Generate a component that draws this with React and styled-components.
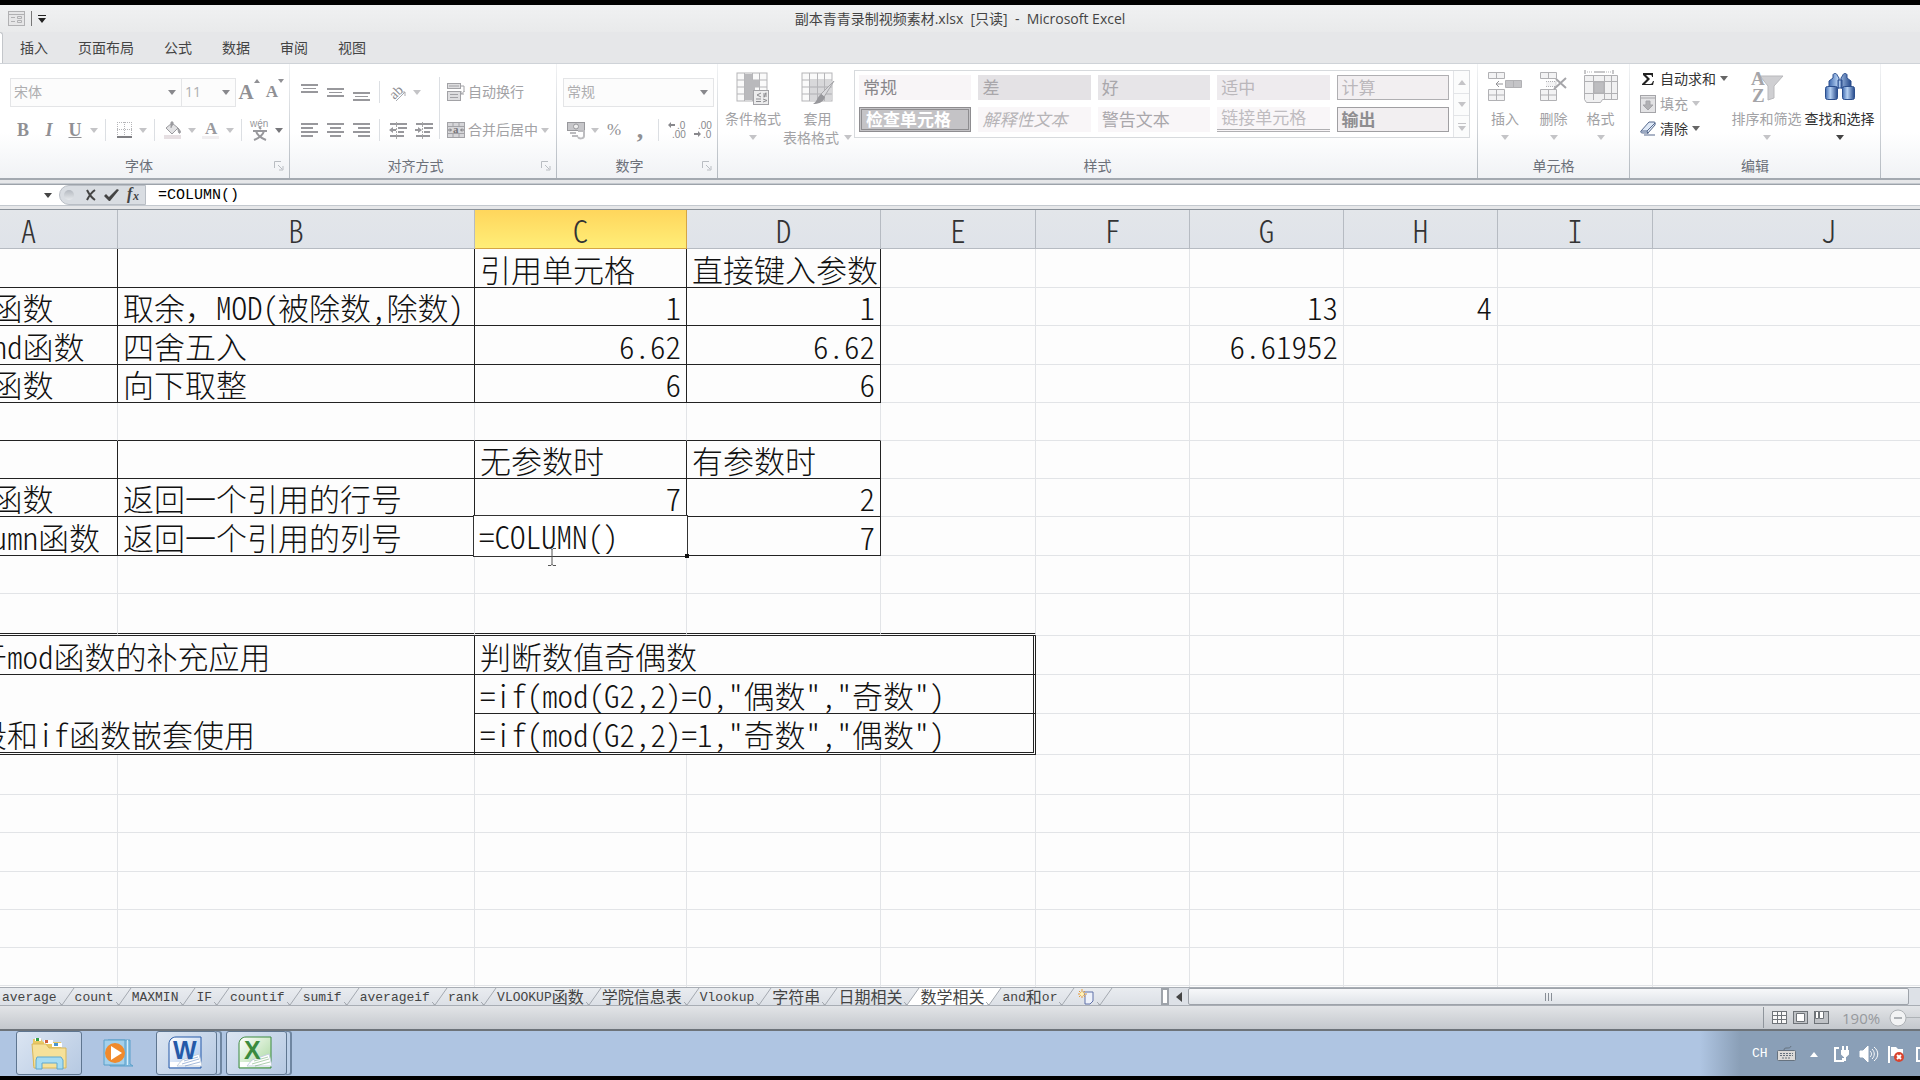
import React from "react";
import styled, { createGlobalStyle, css } from "styled-components";

const UI = `"Open Sans", "Noto Sans CJK SC", sans-serif`;
const MONO = `"Liberation Mono", "Noto Sans CJK SC", monospace`;

const GlobalStyle = createGlobalStyle`
    *{
        box-sizing: border-box;
    }
    body{
        margin: 0;
        background: #000;
    }
    button, input, select{
        font: inherit;
        color: inherit;
        margin: 0;
        padding: 0;
        border: 0;
        background: none;
        outline: none;
        appearance: none;
    }
    svg{
        flex: none;
        overflow: visible;
    }
`

const Screen = styled.div`
    height: 100vh;
    display: flex;
    flex-direction: column;
    overflow: hidden;
    border-top: 5px solid #000;
    border-bottom: 4px solid #000;
    background: #e6e7e9;
    font-family: ${UI};
    font-size: 14px;
    line-height: 20px;
    color: #333;
    white-space: nowrap;
`

/* ---------- title + ribbon tabs ---------- */
const TitleBar = styled.header`
    height: 27px;
    display: grid;
    grid-template-columns: 1fr auto 1fr;
    align-items: center;
    padding: 0 8px;
    background: linear-gradient(#f0f1f2, #e9eaeb);
`
const QuickAccess = styled.div`
    display: flex;
    align-items: center;
    gap: 6px;
`
const QuickLine = styled.span`
    width: 1px;
    height: 15px;
    background: #777;
`
const Title = styled.h1`
    margin: 0;
    font-size: 14px;
    font-weight: 400;
    white-space: pre;
    color: #444;
`
const RibbonTabs = styled.nav`
    height: 32px;
    display: flex;
    align-items: stretch;
    border-bottom: 1px solid #cfd3d8;
`
const FileEdge = styled.span`
    width: 3px;
    margin-right: 2px;
    background: #fff;
    border: 1px solid #c3c6ca;
    border-width: 1px 1px 0 0;
    border-top-right-radius: 3px;
`
const RibbonTab = styled.button`
    padding: 0 15px;
    color: #444;
`

/* ---------- ribbon ---------- */
const Ribbon = styled.section`
    height: 116px;
    display: flex;
    background: linear-gradient(#fff 60%, #f0f2f5);
    border-bottom: 2px solid #a3a9b0;
    padding-left: 4px;
`
const RibbonGroup = styled.div`
    flex: ${p => p.$grow ? "1 1 auto" : "0 0 auto"};
    width: ${p => p.$grow ? "auto" : p.$w + "px"};
    display: flex;
    flex-direction: column;
    border-right: 1px solid;
    border-image: linear-gradient(#f2f3f5, #b3b9c0) 1;
`
const RibbonRest = styled.div`
    width: 39px;
`
const GroupBody = styled.div`
    flex: 1;
    display: flex;
    padding: ${p => p.$big ? "8px 2px 0" : "13px 4px 0 6px"};
`
const GroupFooter = styled.div`
    height: 24px;
    display: flex;
    align-items: center;
    padding-right: ${p => p.$launcher ? 5 : 0}px;
    color: #6c7079;
`
const GroupName = styled.span`
    flex: 1;
    text-align: center;
`
const Stack = styled.div`
    display: flex;
    flex-direction: column;
    gap: 8px;
`
const ToolRow = styled.div`
    height: 30px;
    display: flex;
    align-items: center;
    color: #909094;
`
const ToolButton = styled.button`
    width: 26px;
    height: 26px;
    flex: none;
    display: flex;
    align-items: center;
    justify-content: center;
    font-family: "Liberation Serif", serif;
    font-size: ${p => p.$size || 18}px;
    font-weight: ${p => p.$bold ? 700 : 400};
    font-style: ${p => p.$italic ? "italic" : "normal"};
    text-decoration: ${p => p.$underline ? "underline" : "none"};
`
const SizeButton = styled(ToolButton)`
    & svg{
        align-self: flex-start;
    }
`
const ArrowButton = styled.button`
    width: 12px;
    height: 26px;
    display: flex;
    align-items: center;
    justify-content: center;
`
const Divider = styled.span`
    flex: none;
    width: 1px;
    height: ${p => p.$tall ? 62 : 22}px;
    margin: 0 ${p => p.$tall ? 2 : 5}px;
    background: #dcdfe3;
`
const TextButton = styled.button`
    display: flex;
    align-items: center;
    gap: ${p => p.$short ? 4 : 3}px;
    height: ${p => p.$short ? 25 : 30}px;
    padding: 0 5px;
    color: ${p => p.$on ? "#333" : "#a2a2a5"};
`
const Combo = styled.label`
    width: ${p => p.$w}px;
    height: 29px;
    display: flex;
    align-items: center;
    padding: 0 5px 0 3px;
    border: 1px solid #e4e5e7;
    background: #fcfcfc;
    color: #aeaeb0;
    & + &{
        border-left: 0;
    }
    & select{
        flex: 1;
        min-width: 0;
    }
`
const BigButton = styled.button`
    width: ${p => p.$w}px;
    height: 78px;
    flex: none;
    display: flex;
    flex-direction: column;
    align-items: center;
    line-height: 19px;
    color: ${p => p.$on ? "#333" : "#a2a2a5"};
    & > svg{
        margin-bottom: 3px;
    }
`
const BigLine = styled.span`
    height: 19px;
    display: flex;
    align-items: center;
    gap: 5px;
`
const SmallTools = styled.div`
    width: 98px;
    margin-top: -6px;
    padding-left: 3px;
`
const Gallery = styled.div`
    flex: 1;
    height: 68px;
    display: flex;
    margin: -2px 5px 0;
    border: 1px solid #d7dadd;
    background: #fff;
`
const GalleryGrid = styled.div`
    flex: 1;
    display: grid;
    grid-template-columns: repeat(5, 1fr);
    grid-auto-rows: 25px;
    gap: 7px;
    padding: 4px;
`
const looks = {
    plain: css`background: #f8f5f7; color: #88868a;`,
    bad: css`background: #e4e2e5; color: #a9a7ab;`,
    good: css`background: #e7e5e8; color: #a9a7ab;`,
    neutral: css`background: #eeebee; color: #bab7bb;`,
    calc: css`background: #f2eff1; color: #bab7bb; border: 1px solid #b0afb2;`,
    check: css`background: #c4c3c6; color: #fff; border: 3px double #8e8d90; font-weight: 700;`,
    note: css`background: #f9f6f8; color: #b6b4b7; font-style: italic;`,
    warn: css`background: #f9f6f8; color: #a9a7ab;`,
    link: css`background: #f9f6f8; color: #bfbcc0; border-bottom: 3px double #b0afb2;`,
    output: css`background: #f2eff1; color: #8e8d90; border: 1px solid #a09fa2; font-weight: 700;`,
}
const StyleItem = styled.button`
    display: flex;
    align-items: center;
    padding-left: 4px;
    font-size: 17px;
    line-height: 20px;
    ${p => looks[p.$look]}
`
const GalleryScroll = styled.div`
    width: 16px;
    display: grid;
    grid-template-rows: repeat(3, 1fr);
    border-left: 1px solid #e3e5e8;
    & button{
        display: flex;
        align-items: center;
        justify-content: center;
        background: #fbfcfc;
    }
    & button + button{
        border-top: 1px solid #e3e5e8;
    }
`

/* ---------- formula bar ---------- */
const FormulaBar = styled.div`
    height: 21px;
    margin: 4px 0 4px;
    display: flex;
    align-items: center;
    background: #fff;
    border-top: 1px solid #9da3aa;
    outline: 1px solid #c4c9cf;
`
const NameBox = styled.button`
    width: 59px;
    height: 20px;
    display: flex;
    align-items: center;
    justify-content: flex-end;
    padding-right: 7px;
`
const FormulaTools = styled.div`
    width: 87px;
    height: 20px;
    display: flex;
    align-items: center;
    gap: 7px;
    padding-left: 4px;
    border: 1px solid #b9bec5;
    border-radius: 10px 0 0 10px;
    background: #d9dde2;
    & button{
        display: flex;
    }
`
const Knob = styled.span`
    width: 10px;
    height: 10px;
    margin-right: 4px;
    border-radius: 5px;
    background: linear-gradient(#b4b9c0, #e6e9ec);
`
const FormulaInput = styled.input`
    flex: 1;
    padding: 2px 0 0 12px;
    font-family: ${MONO};
    font-size: 15px;
    color: #000;
`

/* ---------- sheet ---------- */
const SheetArea = styled.main`
    position: relative;
    flex: 1;
    min-height: 0;
    overflow: hidden;
    background: #fdfdfd;
    border-top: 1px solid #8b929a;
`
// scrolled a little to the right, so column A is cut
const Sheet = styled.table`
    width: 2065px;
    margin-left: -60px;
    table-layout: fixed;
    border-collapse: separate;
    border-spacing: 0;
    color: #111;
    font-family: "Noto Sans CJK SC", sans-serif;
    font-size: 31px;
    font-weight: 300;
    font-feature-settings: "hwid";
    line-height: 36px;
`
const ColHead = styled.th`
    height: 39px;
    padding: 2px 0 0;
    font-weight: 300;
    color: #333;
    background: ${p => p.$active ? "linear-gradient(#ffd65c, #ffee78)" : "linear-gradient(#e3e6ea, #dfe3e9)"};
    border-right: 1px solid ${p => p.$active ? "#d5a545" : "#b6bbc2"};
    border-bottom: 1px solid ${p => p.$active ? "#d5a545" : "#b6bbc2"};
`
const lines = {
    grid: "1px solid #e2e4e7",
    black: "1px solid #222",
    double: "3px double #222",
}
const Cell = styled.td`
    position: relative;
    height: ${p => p.$h ? p.$h + "px" : "auto"};
    padding: 0 5px;
    vertical-align: bottom;
    text-align: ${p => p.$num ? "right" : "left"};
    border-right: ${p => lines[p.$right]};
    border-bottom: ${p => lines[p.$bottom]};
`
const Wide = styled.span`
    font-feature-settings: normal;
`
const CellEditor = styled.div`
    position: absolute;
    inset: -2px -2px -2px -2px;
    z-index: 1;
    display: flex;
    background: #fff;
    border: 1px solid #333;
    & input{
        width: 100%;
        padding-left: 5px;
        font-feature-settings: "hwid";
    }
    & i{
        position: absolute;
        right: -2px;
        bottom: -2px;
        width: 4px;
        height: 4px;
        background: #111;
    }
`
const Pointer = styled.svg`
    position: absolute;
    z-index: 2;
    left: 547px;
    top: 338px;
`

/* ---------- sheet tabs ---------- */
const BottomBar = styled.div`
    height: 19px;
    flex: none;
    display: flex;
    background: #dde1e7;
    border-top: 1px solid #a8adb4;
    border-bottom: 1px solid #a8adb4;
`
const SheetTabs = styled.nav`
    flex: 1167 1 0;
    display: flex;
    padding-left: 2px;
    overflow: hidden;
    background: linear-gradient(#e9ecf0, #dce0e6);
`
const SheetTab = styled.button`
    display: flex;
    align-items: center;
    height: 17px;
    font-family: "Noto Sans CJK SC", sans-serif;
    font-size: 16px;
    line-height: 17px;
    color: #444;
    background: ${p => p.$active ? "#fff" : "transparent"};
    & span{
        padding-top: 2px;
        font-family: "Liberation Mono", monospace;
        font-size: 13px;
    }
`
const HScroll = styled.div`
    flex: 753 1 0;
    display: flex;
    align-items: stretch;
    padding-right: 11px;
`
const SplitBox = styled.span`
    width: 8px;
    border: 2px solid #9ea3aa;
    background: #fff;
`
const ScrollButton = styled.button`
    width: 19px;
    display: flex;
    align-items: center;
    justify-content: center;
`
const Thumb = styled.div`
    flex: 1;
    display: flex;
    align-items: center;
    justify-content: center;
    border: 1px solid #9ea3aa;
    border-radius: 2px;
    background: linear-gradient(#f7f8fa, #dfe3e8);
`

/* ---------- status bar ---------- */
const StatusBar = styled.footer`
    height: 25px;
    flex: none;
    display: flex;
    justify-content: flex-end;
    align-items: center;
    background: linear-gradient(#e2e4e7, #c4c8cd);
    border-bottom: 2px solid #6d7379;
`
const StatusTools = styled.div`
    width: 157px;
    height: 21px;
    display: flex;
    align-items: center;
    gap: 6px;
    padding-left: 8px;
    overflow: hidden;
    border-left: 1px solid #8f959c;
    & button{
        display: flex;
    }
`
const Zoom = styled.span`
    margin: 0 3px 0 7px;
    font-size: 15px;
    color: #96999d;
`

/* ---------- taskbar ---------- */
const Taskbar = styled.div`
    height: 45px;
    flex: none;
    display: flex;
    justify-content: space-between;
    background: #afc5e2;
`
const Tasks = styled.div`
    display: flex;
    padding-left: 16px;
    gap: 4px;
`
const Task = styled.button`
    width: ${p => p.$stack ? 61 : 66}px;
    height: 44px;
    display: flex;
    align-items: center;
    justify-content: center;
    margin-right: ${p => p.$stack ? 5 : 0}px;
    ${p => p.$open && css`
        border: 1px solid #5f7690;
        border-radius: 3px;
        background: linear-gradient(135deg, #dbe5f2, #b6c9e2);
    `}
    ${p => p.$stack && css`
        box-shadow: 4px 0 0 -1px #bdd0e8, 5px 0 0 0 #6f86a1;
    `}
`
const Tray = styled.div`
    width: 220px;
    display: flex;
    align-items: center;
    gap: 9px;
    padding-left: 52px;
    overflow: hidden;
    background: linear-gradient(90deg, #afc5e2, #8a9fb7 40px);
`
const Lang = styled.span`
    font-family: "Liberation Mono", monospace;
    font-size: 13px;
    color: #fff;
`

/* ---------- icons ---------- */
const Down = ({ c = "#c4c4c7" }) => (
    <svg width="8" height="5" viewBox="0 0 8 5" fill={c}><path d="M0 0h8L4 5z" /></svg>
)
const Up = ({ c = "#c4c4c7" }) => (
    <svg width="8" height="5" viewBox="0 0 8 5" fill={c}><path d="M0 5h8L4 0z" /></svg>
)
const SmallMark = ({ up }) => (
    <svg width="6" height="4" viewBox="0 0 6 4" fill="#909094"><path d={up ? "M0 4h6L3 0z" : "M0 0h6L3 4z"} /></svg>
)
const Launcher = () => (
    <svg width="10" height="10" viewBox="0 0 10 10" fill="none" stroke="#b9bdc2">
        <path d="M.5 7V.5H7M4 4l4 4M9 5v4H5" />
    </svg>
)
// lines: list of [x, width], y is the first line
const Lines = ({ rows, y }) => (
    <svg width="17" height="18" viewBox="0 0 17 18" fill="#98989c">
        {rows.map(([x, w], i) => <rect key={i} x={x} y={y + i * 4} width={w} height="2" />)}
    </svg>
)
const full = [0, 17]
const VLines = ({ y }) => (
    <svg width="17" height="26" viewBox="0 0 17 26" fill="#98989c">
        <rect x="0" y={y} width="17" height="2" />
        <rect x="2" y={y + 4} width="13" height="1" />
        <rect x="0" y={y + 7} width="17" height="2" />
    </svg>
)
const FormIcon = () => (
    <svg width="17" height="15" viewBox="0 0 17 15" fill="none" stroke="#b1b1b3">
        <rect x=".5" y=".5" width="16" height="14" fill="#e6e6e7" />
        <path d="M1 3.5h15M3 6.5h4M3 10.5h4M9.500 5.500h4v2h-4zM9.500 9.500h4v2h-4z" />
    </svg>
)
const Borders = () => (
    <svg width="15" height="16" viewBox="0 0 15 16" fill="none">
        <path d="M.5 0v14M7.500 0v14M14.500 0v14M0 .5h15M0 7.500h15" stroke="#b5b5b8" strokeDasharray="1 1" />
        <path d="M0 15h15" stroke="#7f7f83" strokeWidth="2" />
    </svg>
)
const Bucket = () => (
    <svg width="18" height="18" viewBox="0 0 18 18">
        <path d="M2 7l6-5 6 5-6 6z" fill="#e2e2e4" stroke="#9a9a9e" />
        <path d="M7 7V1.500c0-1 2-1 2 0V4M14 7c2 2 3 4 2 5s-2-1-2-5" fill="#9a9a9e" stroke="#9a9a9e" />
        <rect y="14" width="17" height="4" fill="#e6dfe2" />
    </svg>
)
const FontColor = () => (
    <svg width="18" height="18" viewBox="0 0 18 18">
        <text x="3" y="13" fontFamily="Liberation Serif" fontSize="17" fontWeight="700" fill="#9a9a9e">A</text>
        <rect y="15" width="17" height="3" fill="#f0eef0" />
    </svg>
)
const Phonetic = () => (
    <svg width="20" height="22" viewBox="0 0 20 22" fill="#98989c">
        <text x="0" y="8" fontFamily="Liberation Sans" fontSize="10">wén</text>
        <path d="M9 8l2 2M3 12h14M14 12c-1 4-5 7-10 9M6 12c1 4 5 7 10 9" fill="none" stroke="#98989c" strokeWidth="2" />
    </svg>
)
const Orient = () => (
    <svg width="18" height="17" viewBox="0 0 18 17">
        <text x="1" y="13" fontFamily="Liberation Serif" fontSize="14" fill="#8d8d91" transform="rotate(-45 7 9)">ab</text>
        <path d="M7 17L16 8M16 12V8h-4" fill="none" stroke="#aaaaae" />
    </svg>
)
const Indent = ({ out }) => (
    <svg width="19" height="17" viewBox="0 0 19 17" fill="#98989c">
        <path d="M1 1h17v2H1zM9 5h9v2H9zM9 9h6v2H9zM1 13h14v2H1z" />
        <path d={out ? "M0 8l4-3v2h3v2H4v2z" : "M7 8L3 5v2H0v2h3v2z"} />
        <path d="M7.500 0v17" stroke="#aaa" strokeDasharray="2 1" />
    </svg>
)
const Wrap = () => (
    <svg width="18" height="18" viewBox="0 0 18 18" fill="none" stroke="#a2a2a6">
        <rect x=".5" y=".5" width="13" height="5" fill="#dedee0" />
        <path d="M2 3h10M14 3h3v6M17.500 8l-3 3M14 8v3h3" />
        <rect x=".5" y="8.500" width="13" height="9" fill="#dedee0" />
        <path d="M3 11.500h8M3 14.500h8" />
    </svg>
)
const Merge = () => (
    <svg width="18" height="16" viewBox="0 0 18 16" fill="none" stroke="#a2a2a6">
        <rect x=".5" y=".5" width="17" height="15" fill="#d6d6d9" />
        <path d="M0 4.500h18M0 11.500h18M6 0v4M12 0v4M6 12v4M12 12v4" />
        <path d="M1 8h3M14 8h3M3 6.500L4.500 8 3 9.500M15 6.500L13.500 8 15 9.500" stroke="#77777b" />
        <text x="6" y="11" fontFamily="Liberation Serif" fontSize="11" fontWeight="700" fill="#77777b" stroke="none">a</text>
    </svg>
)
const Money = () => (
    <svg width="19" height="18" viewBox="0 0 19 18" fill="none" stroke="#98989c">
        <rect x=".5" y="1.500" width="17" height="8" fill="#c7c7ca" />
        <circle cx="9" cy="5.500" r="2.500" fill="#eee" />
        <path d="M11 10h6v5c0 3-5 3-6 1M3 12h6M5 15h6" strokeWidth="2" stroke="#bcbcbf" />
    </svg>
)
const Decimal = ({ more }) => (
    <svg width="19" height="18" viewBox="0 0 19 18" fill="#88888c" fontFamily="Liberation Sans" fontSize="10">
        <text x={more ? 9 : 4} y="8">{more ? ".0" : ".00"}</text>
        <text x={more ? 4 : 9} y="17">{more ? ".00" : ".0"}</text>
        <path d={more ? "M0 4l3-3v2h4v2H3v2z" : "M7 13l-3-3v2H0v2h4v2z"} />
    </svg>
)
const GridBase = () => (
    <g>
        <rect x="1" y="1" width="30" height="28" fill="#fafafa" stroke="#b5b5b8" />
        <path d="M8.500 1v28M16.500 1v28M23.500 1v28M1 8h30M1 15h30M1 22h30" stroke="#b5b5b8" fill="none" />
    </g>
)
const CondFormat = () => (
    <svg width="34" height="34" viewBox="0 0 34 34">
        <GridBase />
        <path d="M9 2h7v6h7v7h-4v7h-3v6H9z" fill="#b9b9bc" />
        <rect x="17.500" y="18.500" width="15" height="14" fill="#ececed" stroke="#a2a2a6" />
        <path d="M25 21l-4 2 4 2M20 27h5M20 29.500h5M27 22h4M27 24h4M30 20.500l-2 5M27 27l4 1.500-4 1.500" fill="none" stroke="#8c8c90" />
    </svg>
)
const TableFormat = () => (
    <svg width="34" height="34" viewBox="0 0 34 34">
        <GridBase />
        <path d="M9 9h21v19H9z" fill="#cfcfd2" opacity=".8" />
        <path d="M9 15h21M9 22h21M16.500 9v19M23.500 9v19" stroke="#b5b5b8" />
        <path d="M33 9L23 25l-3-3z" fill="#dadadd" stroke="#a8a8ab" />
        <path d="M20 22l4 3c-2 6-7 7-12 7 4-2 4-7 8-10z" fill="#98989c" />
    </svg>
)
const InsertCells = () => (
    <svg width="34" height="34" viewBox="0 0 34 34" fill="#f3f3f4" stroke="#b1b1b4">
        <path d="M.5 .5h16v6H.5zM8.500 .5v6M.5 17.500h16v11H.5zM8.500 17.500v11M.5 23h16" />
        <path d="M17.500 8.500h16v7h-16zM25.500 8.500v7" fill="#c4c4c7" />
        <path d="M15 12H8M11 9l-3 3 3 3" fill="none" stroke="#939397" />
    </svg>
)
const DeleteCells = () => (
    <svg width="34" height="34" viewBox="0 0 34 34" fill="#f3f3f4" stroke="#b1b1b4">
        <path d="M3.500 .5h16v6h-16zM11.500 .5v6M3.500 17.500h16v11h-16zM11.500 17.500v11M3.500 23h16" />
        <path d="M9 9.500h10v5H9" strokeDasharray="1 1" />
        <path d="M19 7l10 9M29 6L17 17" strokeWidth="2" fill="none" stroke="#a5a5a9" />
    </svg>
)
const FormatCells = () => (
    <svg width="34" height="34" viewBox="0 0 34 34" fill="#f1f1f2" stroke="#b1b1b4">
        <path d="M1 -2v4M29 -2v4M10 0h11" stroke="#8f8f93" />
        <path d="M3 0h6M22 0h6" strokeDasharray="1 1" />
        <path d="M.5 3.500h33v24h-15l-2 3h-14l-2-3z" />
        <path d="M1 9.500h32M1 21.500h32M9.500 4v24M20.500 4v24M27.500 4v24" />
        <path d="M10 10h10v11H10z" fill="#bdbdc0" />
    </svg>
)
const SortFilter = () => (
    <svg width="34" height="34" viewBox="0 0 34 34" fontFamily="Liberation Serif" fontWeight="700" fill="#a5a5a9">
        <path d="M10 4h23l-9 10v12l-6 2V14z" fill="#cfcfd2" stroke="#b9b9bc" />
        <text x="1" y="13" fontSize="19">A</text>
        <text x="2" y="30" fontSize="19">Z</text>
    </svg>
)
const Binoculars = () => (
    <svg width="34" height="34" viewBox="0 0 34 34">
        <defs>
            <linearGradient id="lens"><stop stopColor="#3f6ab0" /><stop offset=".4" stopColor="#b5d0f2" /><stop offset="1" stopColor="#25498b" /></linearGradient>
        </defs>
        <g fill="url(#lens)" stroke="#2c4f8e">
            <path d="M10 3c0-2 4-2 4 0l2 3v10H6V9l4-3zM20 3c0-2 4-2 4 0v3l4 3v7H18V6z" />
            <path d="M15 8h4v8h-4z" />
            <rect x="2.500" y="14.500" width="12" height="13" rx="2" />
            <rect x="19.500" y="14.500" width="12" height="13" rx="2" />
        </g>
    </svg>
)
const Sigma = () => (
    <svg width="16" height="16" viewBox="0 0 16 16"><path d="M3 2h10v4h-1c0-2-1-2-2-2H6l4 4-5 5h5c2 0 2-1 3-3h1l-1 4H2v-1l5-5-4-4z" fill="#222" /></svg>
)
const Fill = () => (
    <svg width="16" height="18" viewBox="0 0 16 18" fill="#e3e3e5" stroke="#a5a5a9">
        <rect x=".5" y=".5" width="15" height="17" /><path d="M1 3h14" /><path d="M6 6h4v4h3l-5 5-5-5h3z" fill="#b1b1b4" />
    </svg>
)
const Eraser = () => (
    <svg width="16" height="15" viewBox="0 0 16 15" fill="#dfe9f7" stroke="#56698c">
        <path d="M1 10l8-9h5c2 0 1 2 1 3l-7 8H3c-2 0-3-1-2-2z" /><path d="M1 10h6l8-8M7 10l1 3M4 14h11" fill="none" />
    </svg>
)
const Cancel = () => (
    <svg width="12" height="12" viewBox="0 0 12 12" fill="none" stroke="#444" strokeWidth="2"><path d="M2 1c2 4 5 8 8 10M10 1C7 3 4 7 2 11" /></svg>
)
const Check = () => (
    <svg width="15" height="12" viewBox="0 0 15 12"><path d="M0 7l2-2 3 3 8-8 2 1-9 11H5z" fill="#444" /></svg>
)
const Fx = () => (
    <svg width="15" height="16" viewBox="0 0 15 16" fill="#444" fontFamily="Liberation Serif" fontStyle="italic" fontWeight="700">
        <text x="1" y="12" fontSize="16">f</text><text x="7" y="13" fontSize="12">x</text>
    </svg>
)
const Slash = ({ left, right }) => (
    <svg width="18" height="17" viewBox="0 0 18 17">
        {left && <path d="M0 0h17L5 17H0z" fill="#fff" />}
        {right && <path d="M17 0h1v17H5z" fill="#fff" />}
        <path d="M3 17h2L17 0M2 14l3 3" fill="none" stroke="#a4a9b0" />
    </svg>
)
const NewSheet = () => (
    <svg width="20" height="16" viewBox="0 0 20 16">
        <path d="M8 3h10v9l-3 3h-5V6z" fill="#eef2fb" stroke="#5f70a8" />
        <path d="M7 0v9M3 5h9M4 2l6 6M10 2L4 8" stroke="#e39a3a" />
        <circle cx="7" cy="5" r="2" fill="#fff3b8" />
    </svg>
)
const ViewIcon = ({ kind }) => (
    <svg width="15" height="13" viewBox="0 0 15 13" fill={kind === "grid" ? "#f8f8f8" : "#bfc2c6"} stroke="#6e7378">
        <rect x=".5" y=".5" width="14" height="12" />
        {kind === "grid" && <path d="M0 4.500h15M0 8.500h15M5.500 0v13M9.500 0v13" />}
        {kind === "page" && <path d="M3.500 2.500h8v8h-8z" fill="#fff" />}
        {kind === "break" && <path d="M1.500 .5h3v7h-3zM5.500 .5h4v7h-4z" fill="#fff" />}
    </svg>
)
const Minus = () => (
    <svg width="42" height="18" viewBox="0 0 42 18" fill="#f2f3f4" stroke="#aeb2b6">
        <path d="M17 8.500h25" /><circle cx="9" cy="9" r="8" /><path d="M5 9h8" strokeWidth="2" />
    </svg>
)
const Explorer = () => (
    <svg width="38" height="36" viewBox="0 0 38 36">
        <path d="M3 4h8l2 3h18v24H3z" fill="#e9c963" />
        <path d="M5 3h6v3H5z" fill="#fff" /><path d="M6 3h3v3H6z" fill="#37a046" />
        <path d="M14 5h9v4h-9z" fill="#fff" /><path d="M15 5h3v3h-3z" fill="#d2603a" />
        <path d="M22 8h10v4H22z" fill="#fff" /><path d="M24 8h4v3h-4z" fill="#4a97d0" />
        <path d="M2 9h14l3 4h17v20H4z" fill="#f6e19a" stroke="#d9b75a" />
        <path d="M7 22h24l2 3v9h-6v-6H12v6H6v-9z" fill="#a6dcf3" stroke="#5fa8cf" />
    </svg>
)
const Player = () => (
    <svg width="34" height="30" viewBox="0 0 34 30">
        <path d="M6 2h22v24l3 2H8z" fill="#8cc2e3" stroke="#5b9fc9" />
        <path d="M2 2h21v25H2z" fill="#a3d0eb" stroke="#5b9fc9" /><path d="M25.500 2v25" stroke="#d8eefa" />
        <circle cx="13" cy="15" r="10" fill="#f08a2c" /><path d="M9 8l11 7-11 7z" fill="#fff" />
    </svg>
)
const OfficeIcon = ({ letter, c, pale }) => (
    <svg width="38" height="34" viewBox="0 0 38 34">
        <defs>
            <linearGradient id={"page" + letter} x2="1" y2="1"><stop stopColor="#fff" /><stop offset="1" stopColor={pale} /></linearGradient>
        </defs>
        <path d="M8 1h25v31H1V8c0-4 3-7 7-7z" fill={`url(#page${letter})`} stroke={c} />
        <path d="M2 26h30v5H2z" fill="#fff" />
        <path d="M14 24l17-6 3 12H9z" fill="#fff" stroke="#c3cfde" />
        <path d="M16 25l14-4M14 28l17-5M17 30l15-4" stroke={c} opacity=".4" />
        <text x={letter === "W" ? 5 : 6} y="23" fontFamily="Liberation Sans" fontSize="25" fontWeight="700" fill={c}>{letter}</text>
    </svg>
)
const Keyboard = () => (
    <svg width="19" height="15" viewBox="0 0 19 15" fill="#dcdad8" stroke="#66727f">
        <path d="M7 4c0-4 6 0 7-4" fill="none" /><rect x=".5" y="4.500" width="18" height="10" rx="1" />
        <path d="M3 7.500h13M3 9.500h13M5 12h9" strokeDasharray="2 1" />
    </svg>
)
const Plug = () => (
    <svg width="18" height="18" viewBox="0 0 18 18" fill="none" stroke="#fff" strokeWidth="2">
        <path d="M7 3H3v13h8v-3" /><path d="M10 6h6v3l-2 2h-2l-2-2zM11 1v4M15 1v4M13 12v4" fill="#fff" />
    </svg>
)
const Speaker = () => (
    <svg width="19" height="18" viewBox="0 0 19 18" fill="none" stroke="#fff">
        <path d="M1 6h3l5-5v16l-5-5H1z" fill="#fff" /><path d="M11 6c2 2 2 4 0 6M13 4c3 3 3 7 0 10M15 2c5 4 5 10 0 14" />
    </svg>
)
const Flag = () => (
    <svg width="18" height="18" viewBox="0 0 18 18">
        <path d="M2 1v17" stroke="#fff" strokeWidth="2" /><path d="M4 2h5l2 2h5v7H4z" fill="#fff" />
        <circle cx="12" cy="12" r="5" fill="#d9442f" /><path d="M10 10l4 4M14 10l-4 4" stroke="#fff" strokeWidth="2" />
    </svg>
)

/* ---------- data ---------- */
const columns = [
    ["A", 178], ["B", 357], ["C", 212], ["D", 194], ["E", 155],
    ["F", 154], ["G", 154], ["H", 154], ["I", 155], ["J", 352],
]
// h: row height, box: row is inside a bordered block (A-D), cells: text by column
const rows = [
    { h: 39, box: true, cells: { C: "引用单元格", D: "直接键入参数" } },
    { h: 38, box: true, cells: { A: "mod函数", B: <>取余<Wide>，</Wide>MOD(被除数,除数)</>, C: 1, D: 1, G: 13, H: 4 } },
    { h: 39, box: true, cells: { A: "round函数", B: "四舍五入", C: "6.62", D: "6.62", G: "6.61952" } },
    { h: 38, box: true, cells: { A: "int函数", B: "向下取整", C: 6, D: 6 } },
    { h: 38, above: true, cells: {} },
    { h: 38, box: true, cells: { C: "无参数时", D: "有参数时" } },
    { h: 38, box: true, cells: { A: "row函数", B: "返回一个引用的行号", C: 7, D: 2 } },
    { h: 39, box: true, cells: { A: "column函数", B: "返回一个引用的列号", C: "edit", D: 7 } },
    { h: 38, cells: {} },
    { h: 42, double: true, cells: {} },
    { h: 39, note: ["关于mod函数的补充应用", "判断数值奇偶数"] },
    { h: 39, span: 2, note: ["分段和if函数嵌套使用", "=if(mod(G2,2)=0,\"偶数\",\"奇数\")"] },
    { h: 41, last: true, note: [null, "=if(mod(G2,2)=1,\"奇数\",\"偶数\")"] },
    { h: 40, cells: {} },
    { h: 38, cells: {} },
    { h: 39, cells: {} },
    { h: 38, cells: {} },
    { h: 38, cells: {} },
    { h: 38, cells: {} },
    { h: 38, cells: {} },
]
const sheetTabs = [
    "average", "count", "MAXMIN", "IF", "countif", "sumif", "averageif", "rank", "VLOOKUP函数",
    "学院信息表", "Vlookup", "字符串", "日期相关", "数学相关", "and和or",
]
const gallery = [
    ["常规", "plain"], ["差", "bad"], ["好", "good"], ["适中", "neutral"], ["计算", "calc"],
    ["检查单元格", "check"], ["解释性文本", "note"], ["警告文本", "warn"], ["链接单元格", "link"], ["输出", "output"],
]

// latin runs of a tab name get their own font next to the chinese text
const mixed = text => text.split(/([\x20-\x7e]+)/).filter(Boolean).map((part, i) =>
    /[\x20-\x7e]/.test(part) ? <span key={i}>{part}</span> : part
)

const Group = ({ name, launcher, big, children, ...size }) => (
    <RibbonGroup {...size}>
        <GroupBody $big={big}>{children}</GroupBody>
        <GroupFooter $launcher={launcher}>
            <GroupName>{name}</GroupName>
            {launcher && <Launcher />}
        </GroupFooter>
    </RibbonGroup>
)

const Select = ({ label, value, w }) => (
    <Combo $w={w}>
        <select aria-label={label} defaultValue={value}><option>{value}</option></select>
        <Down c="#88888c" />
    </Combo>
)

const Arrow = ({ c, label }) => <ArrowButton aria-label={label}><Down c={c} /></ArrowButton>

const Row = ({ row }) => {
    if (row.note) {
        return (
            <tr>
                {row.note[0] && (
                    <Cell colSpan={2} rowSpan={row.span || 1} $right="black" $bottom={row.span ? "double" : "black"}>
                        {row.note[0]}
                    </Cell>
                )}
                <Cell colSpan={3} $h={row.h} $right="double" $bottom={row.last ? "double" : "black"}>{row.note[1]}</Cell>
                {columns.slice(5).map(([name]) => <Cell key={name} $h={row.h} $right="grid" $bottom="grid" />)}
            </tr>
        )
    }
    return (
        <tr>
            {columns.map(([name], i) => {
                const value = row.cells[name]
                const inBox = i < 4
                const num = value !== undefined && /^[\d.]+$/.test(value)
                let bottom = inBox && (row.box || row.above) ? "black" : "grid"
                if (row.double && i < 5) bottom = "double"
                return (
                    <Cell key={name} $h={row.h} $num={num} $right={inBox && row.box ? "black" : "grid"} $bottom={bottom}>
                        {value === "edit"
                            ? <CellEditor><input aria-label="C8" defaultValue="=COLUMN()" /><i /></CellEditor>
                            : value}
                    </Cell>
                )
            })}
        </tr>
    )
}

const App = () => {
    return (
        <Screen>
            <GlobalStyle />
            <TitleBar>
                <QuickAccess>
                    <FormIcon />
                    <QuickLine />
                    <svg width="8" height="8" viewBox="0 0 8 8" fill="#222"><path d="M0 0h8v1H0zM0 3h8L4 8z" /></svg>
                </QuickAccess>
                <Title>副本青青录制视频素材.xlsx  [只读]  -  Microsoft Excel</Title>
            </TitleBar>
            <RibbonTabs>
                <FileEdge />
                {["插入", "页面布局", "公式", "数据", "审阅", "视图"].map(t => <RibbonTab key={t}>{t}</RibbonTab>)}
            </RibbonTabs>

            <Ribbon>
                <Group name="字体" launcher $w={286}>
                    <Stack>
                        <ToolRow>
                            <Select label="字体" value="宋体" w={172} />
                            <Select label="字号" value="11" w={54} />
                            <SizeButton $bold $size={21}>A<SmallMark up /></SizeButton>
                            <SizeButton $bold $size={17}>A<SmallMark /></SizeButton>
                        </ToolRow>
                        <ToolRow>
                            <ToolButton $bold>B</ToolButton>
                            <ToolButton $bold $italic>I</ToolButton>
                            <ToolButton $bold $underline>U</ToolButton>
                            <Arrow label="下划线" />
                            <Divider />
                            <ToolButton aria-label="边框"><Borders /></ToolButton>
                            <Arrow label="边框选项" />
                            <Divider />
                            <ToolButton aria-label="填充颜色"><Bucket /></ToolButton>
                            <Arrow label="填充选项" />
                            <ToolButton aria-label="字体颜色"><FontColor /></ToolButton>
                            <Arrow label="颜色选项" />
                            <Divider />
                            <ToolButton aria-label="拼音"><Phonetic /></ToolButton>
                            <Arrow label="拼音选项" c="#77777b" />
                        </ToolRow>
                    </Stack>
                </Group>

                <Group name="对齐方式" launcher $w={267}>
                    <Stack>
                        <ToolRow>
                            <ToolButton aria-label="顶端对齐"><VLines y={5} /></ToolButton>
                            <ToolButton aria-label="垂直居中"><VLines y={9} /></ToolButton>
                            <ToolButton aria-label="底端对齐"><VLines y={13} /></ToolButton>
                            <Divider />
                            <ToolButton aria-label="方向"><Orient /></ToolButton>
                            <Arrow label="方向选项" />
                        </ToolRow>
                        <ToolRow>
                            <ToolButton aria-label="左对齐"><Lines y={2} rows={[full, [0, 12], full, [0, 12]]} /></ToolButton>
                            <ToolButton aria-label="居中"><Lines y={2} rows={[full, [3, 11], full, [3, 11]]} /></ToolButton>
                            <ToolButton aria-label="右对齐"><Lines y={2} rows={[full, [5, 12], full, [5, 12]]} /></ToolButton>
                            <Divider />
                            <ToolButton aria-label="减少缩进"><Indent out /></ToolButton>
                            <ToolButton aria-label="增加缩进"><Indent /></ToolButton>
                        </ToolRow>
                    </Stack>
                    <Divider $tall />
                    <Stack>
                        <TextButton><Wrap />自动换行</TextButton>
                        <TextButton><Merge />合并后居中<Down /></TextButton>
                    </Stack>
                </Group>

                <Group name="数字" launcher $w={161}>
                    <Stack>
                        <ToolRow><Select label="数字格式" value="常规" w={151} /></ToolRow>
                        <ToolRow>
                            <ToolButton aria-label="会计格式"><Money /></ToolButton>
                            <Arrow label="会计选项" />
                            <ToolButton $size={17}>%</ToolButton>
                            <ToolButton $bold $size={26}>,</ToolButton>
                            <Divider />
                            <ToolButton aria-label="增加小数位数"><Decimal more /></ToolButton>
                            <ToolButton aria-label="减少小数位数"><Decimal /></ToolButton>
                        </ToolRow>
                    </Stack>
                </Group>

                <Group name="样式" big $grow>
                    <BigButton $w={66}><CondFormat /><BigLine>条件格式</BigLine><BigLine><Down /></BigLine></BigButton>
                    <BigButton $w={63}><TableFormat /><BigLine>套用</BigLine><BigLine>表格格式<Down /></BigLine></BigButton>
                    <Gallery>
                        <GalleryGrid>
                            {gallery.map(([text, look]) => <StyleItem key={text} $look={look}>{text}</StyleItem>)}
                        </GalleryGrid>
                        <GalleryScroll>
                            <button aria-label="上一行"><Up /></button>
                            <button aria-label="下一行"><Down /></button>
                            <button aria-label="其他">
                                <svg width="8" height="8" viewBox="0 0 8 8" fill="#c4c4c7"><path d="M0 0h8v1H0zM0 3h8L4 8z" /></svg>
                            </button>
                        </GalleryScroll>
                    </Gallery>
                </Group>

                <Group name="单元格" big $w={152}>
                    <BigButton $w={50}><InsertCells /><BigLine>插入</BigLine><BigLine><Down /></BigLine></BigButton>
                    <BigButton $w={47}><DeleteCells /><BigLine>删除</BigLine><BigLine><Down /></BigLine></BigButton>
                    <BigButton $w={47}><FormatCells /><BigLine>格式</BigLine><BigLine><Down /></BigLine></BigButton>
                </Group>

                <Group name="编辑" big $w={251}>
                    <SmallTools>
                        <TextButton $short $on><Sigma />自动求和<Down c="#666" /></TextButton>
                        <TextButton $short><Fill />填充<Down /></TextButton>
                        <TextButton $short $on><Eraser />清除<Down c="#666" /></TextButton>
                    </SmallTools>
                    <BigButton $w={73}><SortFilter /><BigLine>排序和筛选</BigLine><BigLine><Down /></BigLine></BigButton>
                    <BigButton $w={73} $on><Binoculars /><BigLine>查找和选择</BigLine><BigLine><Down c="#444" /></BigLine></BigButton>
                </Group>
                <RibbonRest />
            </Ribbon>

            <FormulaBar>
                <NameBox aria-label="名称框"><Down c="#444" /></NameBox>
                <FormulaTools>
                    <Knob />
                    <button aria-label="取消"><Cancel /></button>
                    <button aria-label="输入"><Check /></button>
                    <button aria-label="插入函数"><Fx /></button>
                </FormulaTools>
                <FormulaInput aria-label="编辑栏" defaultValue="=COLUMN()" />
            </FormulaBar>

            <SheetArea>
                <Sheet>
                    <colgroup>
                        {columns.map(([name, w]) => <col key={name} width={w} />)}
                    </colgroup>
                    <thead>
                        <tr>{columns.map(([name]) => <ColHead key={name} $active={name === "C"}>{name}</ColHead>)}</tr>
                    </thead>
                    <tbody>
                        {rows.map((row, i) => <Row key={i} row={row} />)}
                    </tbody>
                </Sheet>
                <Pointer width="10" height="18" viewBox="0 0 10 18" fill="none" stroke="#555">
                    <path d="M1 .5h3l1 1 1-1h3M5 1v16M1 17.500h3l1-1 1 1h3" />
                </Pointer>
            </SheetArea>

            <BottomBar>
                <SheetTabs>
                    {sheetTabs.map((t, i) => {
                        const active = t === "数学相关"
                        return (
                            <React.Fragment key={t}>
                                <SheetTab $active={active}>{mixed(t)}</SheetTab>
                                <Slash left={active} right={sheetTabs[i + 1] === "数学相关"} />
                            </React.Fragment>
                        )
                    })}
                    <SheetTab aria-label="插入工作表"><NewSheet /></SheetTab>
                    <Slash />
                </SheetTabs>
                <HScroll>
                    <SplitBox />
                    <ScrollButton aria-label="向左滚动">
                        <svg width="6" height="10" viewBox="0 0 6 10" fill="#444"><path d="M6 0v10L0 5z" /></svg>
                    </ScrollButton>
                    <Thumb>
                        <svg width="8" height="8" viewBox="0 0 8 8" stroke="#888e96"><path d="M.5 0v8M3.500 0v8M6.500 0v8" /></svg>
                    </Thumb>
                </HScroll>
            </BottomBar>

            <StatusBar>
                <StatusTools>
                    <button aria-label="普通"><ViewIcon kind="grid" /></button>
                    <button aria-label="页面布局"><ViewIcon kind="page" /></button>
                    <button aria-label="分页预览"><ViewIcon kind="break" /></button>
                    <Zoom>190%</Zoom>
                    <button aria-label="缩小"><Minus /></button>
                </StatusTools>
            </StatusBar>

            <Taskbar>
                <Tasks>
                    <Task $open aria-label="资源管理器"><Explorer /></Task>
                    <Task aria-label="播放器"><Player /></Task>
                    <Task $open $stack aria-label="Word"><OfficeIcon letter="W" c="#2459a8" pale="#a9c5ec" /></Task>
                    <Task $open $stack aria-label="Excel"><OfficeIcon letter="X" c="#3b8a3e" pale="#a5d69b" /></Task>
                </Tasks>
                <Tray>
                    <Lang>CH</Lang>
                    <Keyboard />
                    <svg width="18" height="10" viewBox="0 0 18 10" fill="#fff"><path d="M5 8h8L9 3z" /></svg>
                    <Plug />
                    <Speaker />
                    <Flag />
                    <Plug />
                </Tray>
            </Taskbar>
        </Screen>
    )
}

export default App;
